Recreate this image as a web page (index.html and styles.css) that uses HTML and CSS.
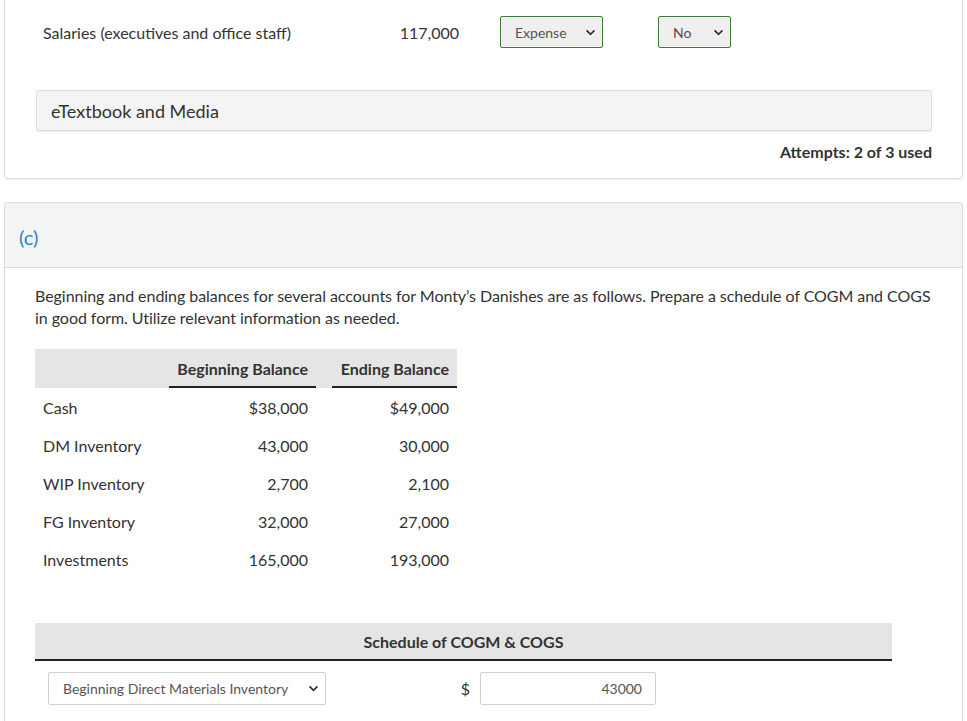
FILE: index.html
```html
<!DOCTYPE html>
<html>
<head>
<meta charset="utf-8">
<link rel="stylesheet" href="styles.css">
</head>
<body>
<div class="card card-top">
  <div class="acct-row">
    <div class="acct">Salaries (executives and office staff)</div>
    <div class="amt">117,000</div>
    <div class="sel sel-green sel-type"><span>Expense</span><svg class="chev" viewBox="0 0 12 8" width="11" height="7"><polyline points="1.5,1.5 6,6 10.5,1.5" fill="none" stroke="#333" stroke-width="2"/></svg></div>
    <div class="sel sel-green sel-yn"><span class="no">No</span><svg class="chev" viewBox="0 0 12 8" width="11" height="7"><polyline points="1.5,1.5 6,6 10.5,1.5" fill="none" stroke="#333" stroke-width="2"/></svg></div>
  </div>
  <div class="etext">eTextbook and Media</div>
  <div class="attempts">Attempts: 2 of 3 used</div>
</div>

<div class="card card-c">
  <div class="card-head"><span class="part">(c)</span></div>
  <div class="card-body">
    <p class="intro">Beginning and ending balances for several accounts for Monty’s Danishes are as follows. Prepare a schedule of COGM and COGS in good form. Utilize relevant information as needed.</p>

    <div class="bal-table">
      <div class="bal-row bal-head">
        <div class="c-label"></div>
        <div class="c-beg">Beginning Balance</div>
        <div class="c-end">Ending Balance</div>
      </div>
      <div class="bal-row">
        <div class="c-label">Cash</div>
        <div class="c-beg">$38,000</div>
        <div class="c-end">$49,000</div>
      </div>
      <div class="bal-row">
        <div class="c-label">DM Inventory</div>
        <div class="c-beg">43,000</div>
        <div class="c-end">30,000</div>
      </div>
      <div class="bal-row">
        <div class="c-label">WIP Inventory</div>
        <div class="c-beg">2,700</div>
        <div class="c-end">2,100</div>
      </div>
      <div class="bal-row">
        <div class="c-label">FG Inventory</div>
        <div class="c-beg">32,000</div>
        <div class="c-end">27,000</div>
      </div>
      <div class="bal-row">
        <div class="c-label">Investments</div>
        <div class="c-beg">165,000</div>
        <div class="c-end">193,000</div>
      </div>
    </div>

    <div class="sched-head">Schedule of COGM &amp; COGS</div>
    <div class="sched-row">
      <div class="sel sel-plain sel-item"><span>Beginning Direct Materials Inventory</span><svg class="chev" viewBox="0 0 12 8" width="11" height="7"><polyline points="1.5,1.5 6,6 10.5,1.5" fill="none" stroke="#333" stroke-width="2"/></svg></div>
      <div class="dollar">$</div>
      <div class="num-input">43000</div>
    </div>
  </div>
</div>
</body>
</html>
```

FILE: styles.css
```css
* { box-sizing: border-box; }
html, body {
  margin: 0;
  padding: 0;
  background: #fff;
  font-family: Lato, "Open Sans", "Liberation Sans", sans-serif;
  color: #333;
  font-size: 16px;
}
body { overflow: hidden; height: 721px; }

.card {
  margin: 0 4px;
  border: 1px solid #dcdcdc;
  border-radius: 4px;
  background: #fff;
  box-shadow: 0 1px 2px rgba(0,0,0,0.06);
}

.card-top {
  margin-top: -6px;
  padding: 21px 30px 16px 31px;
  border-top-left-radius: 0;
  border-top-right-radius: 0;
}

.acct-row {
  display: flex;
  align-items: center;
  height: 32px;
  padding-left: 7px;
}
.acct { width: 330px; }
.amt { width: 86px; text-align: right; }

.sel {
  display: flex;
  align-items: center;
  justify-content: space-between;
  font-size: 14px;
  color: #555;
}
.sel-green {
  height: 32px;
  border: 1px solid #3d7b3d;
  border-radius: 2px;
  background: #efefef;
}
.sel-type { width: 103px; margin-left: 41px; padding: 0 6px 0 14px; }
.sel-yn { width: 73px; margin-left: 55px; padding: 0 6px 0 14px; }
.no { color: #5b4747; }
.chev { display: block; flex: none; }

.etext {
  margin-top: 42px;
  height: 41px;
  display: flex;
  align-items: center;
  padding-left: 14px;
  font-size: 18px;
  background: #f4f4f4;
  border: 1px solid #dedede;
  border-radius: 3px;
  box-shadow: 0 1px 2px rgba(0,0,0,0.08);
}

.attempts {
  margin-top: 11px;
  text-align: right;
  font-weight: 700;
  line-height: 20px;
}

.card-c {
  margin-top: 23px;
  border-bottom: none;
  border-bottom-left-radius: 0;
  border-bottom-right-radius: 0;
  height: 560px;
}
.card-head {
  height: 65px;
  background: #f4f4f4;
  border-bottom: 1px solid #dcdcdc;
  border-radius: 3px 3px 0 0;
  display: flex;
  align-items: center;
  padding: 3px 0 0 14px;
}
.part { color: #1b88c9; font-size: 20px; }

.card-body { padding: 17px 30px 0 30px; }
.intro {
  margin: 0 -12px 0 0;
  line-height: 22px;
  letter-spacing: -0.05px;
}

.bal-table { width: 422px; margin-top: 20px; }
.bal-row {
  display: flex;
  height: 38px;
  align-items: center;
}
.c-label { width: 134px; padding-left: 8px; }
.c-beg { width: 147px; text-align: right; padding-right: 8px; }
.c-end { width: 125px; margin-left: 16px; text-align: right; padding-right: 8px; }
.bal-head {
  background: #e5e5e5;
  align-items: stretch;
  height: 39px;
  font-weight: 700;
}
.bal-head > div { display: flex; align-items: center; justify-content: flex-end; padding-top: 1px; }
.bal-head .c-beg, .bal-head .c-end { border-bottom: 2px solid #222; }

.sched-head {
  margin-top: 45px;
  width: 857px;
  height: 38px;
  background: #e5e5e5;
  border-bottom: 2px solid #222;
  display: flex;
  align-items: center;
  justify-content: center;
  font-weight: 700;
  padding-top: 1px;
}

.sched-row {
  display: flex;
  align-items: center;
  margin-top: 11px;
  padding-left: 13px;
}
.sel-plain {
  height: 33px;
  border: 1px solid #d0d0d0;
  border-radius: 2px;
  background: #fff;
}
.sel-item { width: 278px; padding: 0 6px 0 14px; }
.dollar { width: 154px; text-align: right; padding-right: 10px; font-size: 16px; }
.num-input {
  width: 176px;
  height: 33px;
  border: 1px solid #d0d0d0;
  border-radius: 2px;
  display: flex;
  align-items: center;
  justify-content: flex-end;
  padding-right: 13px;
  font-size: 14px;
  color: #555;
}
```
